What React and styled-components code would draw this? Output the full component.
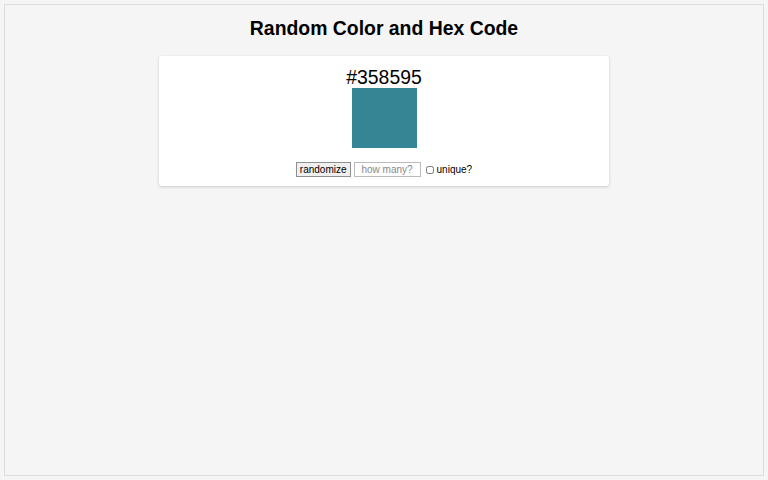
import React, { useState } from 'react';
import styled, { createGlobalStyle } from 'styled-components';

const GlobalStyle = createGlobalStyle`
  html, body {
    margin: 0;
    background: #f5f5f5;
    font-family: "Liberation Sans", Arial, sans-serif;
  }
`

const Frame = styled.div`
  margin: 4px;
  height: 472px;
  border: 1px solid #dcdcdc;
  box-sizing: border-box;
  background: #f5f5f5;
`

const Title = styled.h1`
  margin: 13px 0 18px;
  font-size: 19.4px;
  line-height: 20px;
  font-weight: bold;
  text-align: center;
  color: #000;
`

const Card = styled.div`
  width: 450px;
  margin: 0 auto;
  padding: 10px 0 9px;
  box-sizing: border-box;
  background: #fff;
  border-radius: 3px;
  box-shadow: 0 1px 3px rgba(0, 0, 0, 0.18);
  display: flex;
  flex-direction: column;
  align-items: center;
`

const Hex = styled.div`
  font-size: 19.4px;
  line-height: 22px;
  color: #000;
`

const Swatch = styled.div`
  width: 65px;
  height: 60px;
  background: ${p => p.color};
`

const Controls = styled.div`
  margin-top: 14px;
  display: flex;
  align-items: center;
  font-size: 10px;
`

const Button = styled.button`
  height: 15px;
  padding: 0 3px;
  font-family: inherit;
  font-size: 10px;
  line-height: 13px;
  color: #000;
  background: #efefef;
  border: 1px solid #8f8f8f;
  border-radius: 0;
`

const Count = styled.input`
  width: 67px;
  height: 15px;
  margin-left: 3px;
  padding: 0 4px;
  box-sizing: border-box;
  font-family: inherit;
  font-size: 10px;
  text-align: center;
  border: 1px solid #bbb;
  &::placeholder {
    color: #888;
  }
`

const Unique = styled.label`
  margin-left: 5px;
  display: flex;
  align-items: center;
  color: #000;

  input {
    width: 8px;
    height: 8px;
    margin: 0 3px 0 0;
  }
`

const randomHex = () =>
  '#' + Math.floor(Math.random() * 0xffffff).toString(16).padStart(6, '0');

export default function App() {
  const [color, setColor] = useState('#358595');

  return (
    <>
      <GlobalStyle />
      <Frame>
        <Title>Random Color and Hex Code</Title>
        <Card>
          <Hex>{color}</Hex>
          <Swatch color={color} />
          <Controls>
            <Button onClick={() => setColor(randomHex())}>randomize</Button>
            <Count type="text" placeholder="how many?" />
            <Unique>
              <input type="checkbox" />
              unique?
            </Unique>
          </Controls>
        </Card>
      </Frame>
    </>
  );
}
